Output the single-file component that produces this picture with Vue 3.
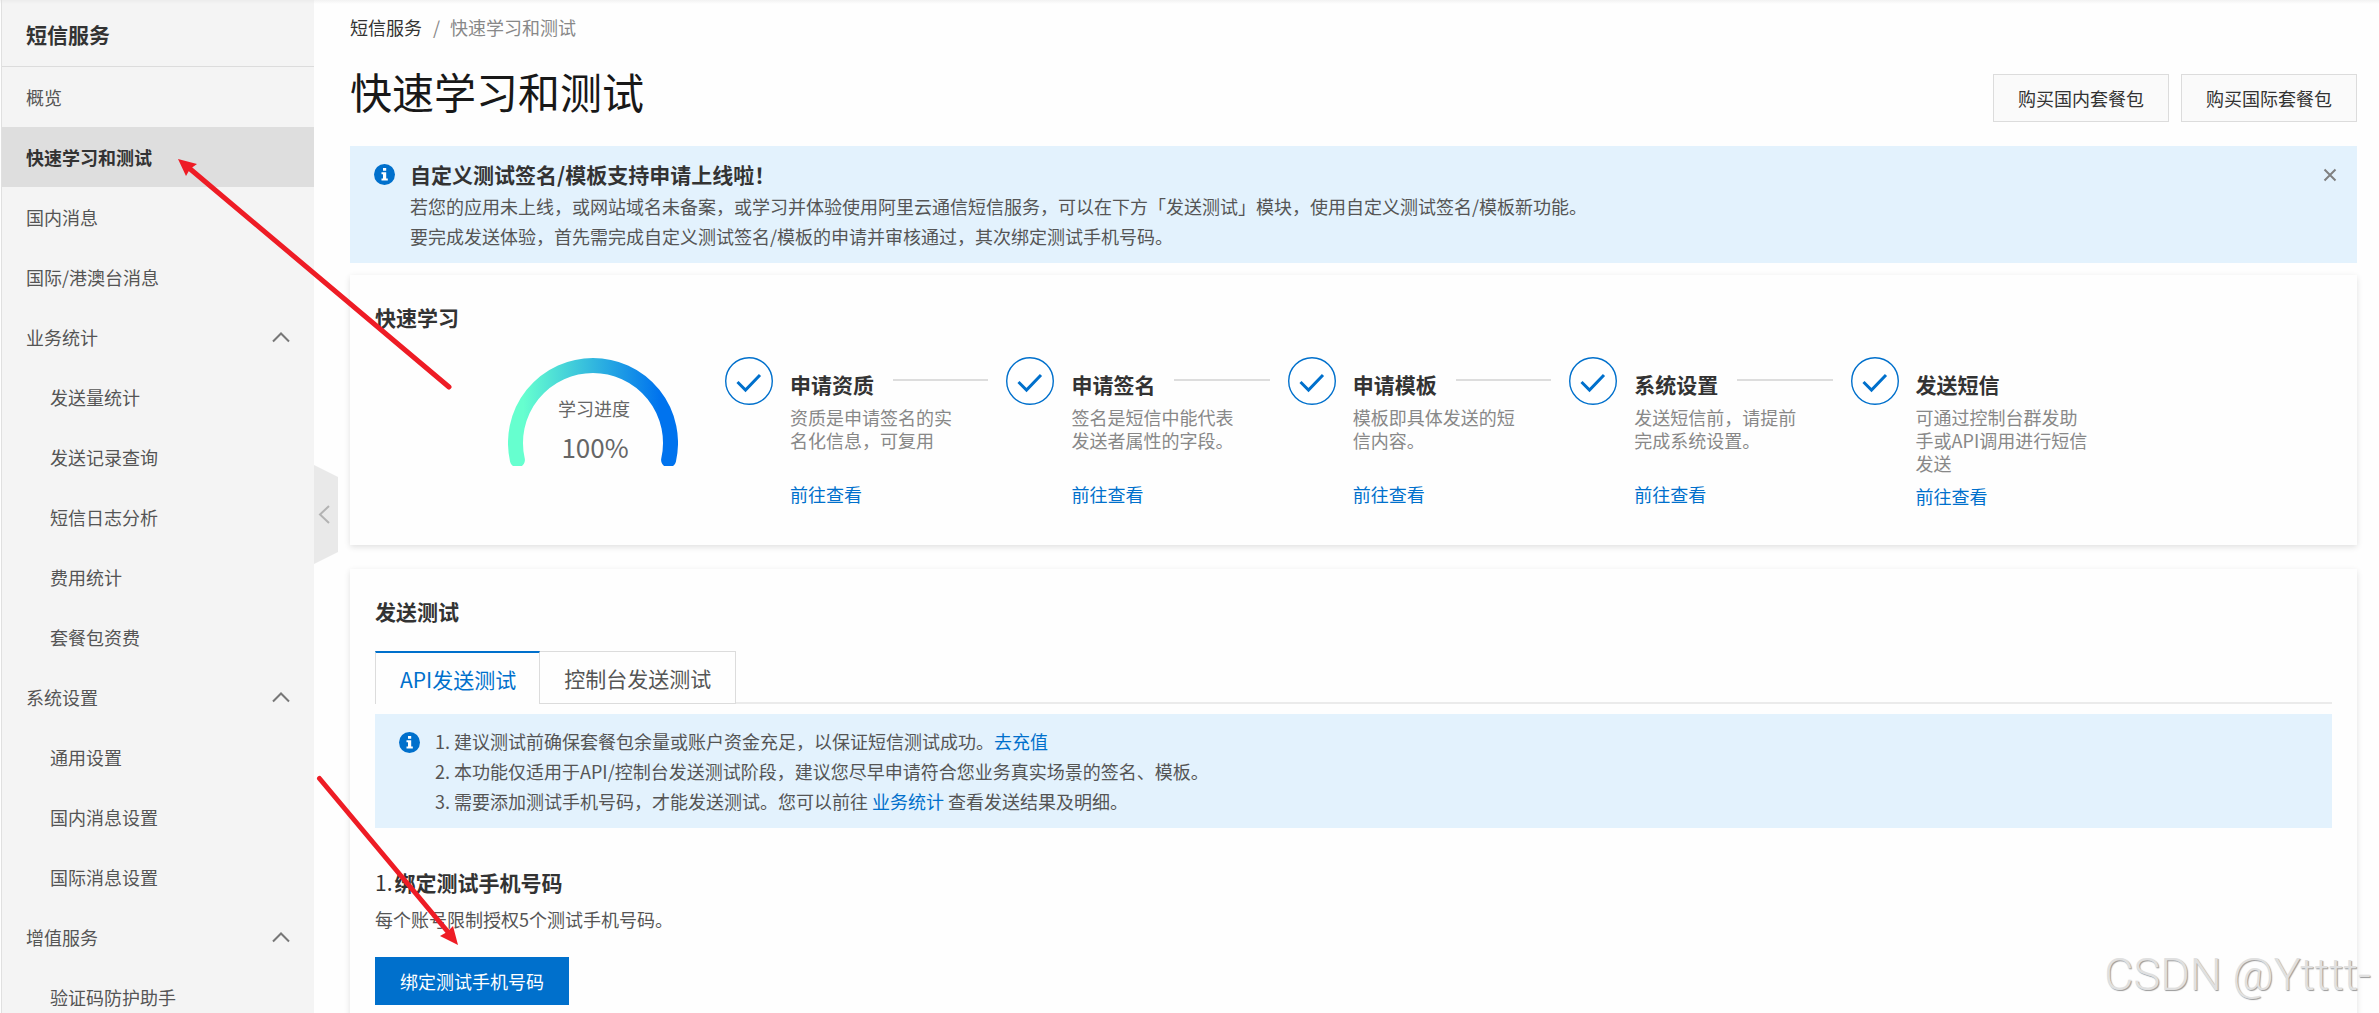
<script setup>
import { ref } from 'vue'

const menu = [
  { label: '概览' },
  { label: '快速学习和测试', active: true },
  { label: '国内消息' },
  { label: '国际/港澳台消息' },
  { label: '业务统计', children: ['发送量统计', '发送记录查询', '短信日志分析', '费用统计', '套餐包资费'] },
  { label: '系统设置', children: ['通用设置', '国内消息设置', '国际消息设置'] },
  { label: '增值服务', children: ['验证码防护助手'] },
]

const steps = [
  { title: '申请资质', desc: '资质是申请签名的实名化信息，可复用' },
  { title: '申请签名', desc: '签名是短信中能代表发送者属性的字段。' },
  { title: '申请模板', desc: '模板即具体发送的短信内容。' },
  { title: '系统设置', desc: '发送短信前，请提前完成系统设置。' },
  { title: '发送短信', desc: '可通过控制台群发助手或API调用进行短信发送' },
]

const tabs = ['API发送测试', '控制台发送测试']
const activeTab = ref(0)
const noticeOpen = ref(true)
</script>

<template>
  <div class="shell">
    <aside class="sidebar">
      <div class="brand">短信服务</div>
      <nav>
        <ul class="menu">
          <li v-for="item in menu" :key="item.label">
            <a href="#" class="item" :class="{ active: item.active }">
              <span>{{ item.label }}</span>
              <svg v-if="item.children" width="20" height="12" viewBox="0 0 20 12" aria-hidden="true">
                <path d="M2 10.5 10 2.5 18 10.5" fill="none" stroke="#777" stroke-width="2" />
              </svg>
            </a>
            <ul v-if="item.children" class="menu">
              <li v-for="child in item.children" :key="child">
                <a href="#" class="item sub">{{ child }}</a>
              </li>
            </ul>
          </li>
        </ul>
      </nav>
      <button class="collapse" type="button" aria-label="收起菜单">
        <svg width="24" height="99" viewBox="0 0 24 99">
          <path d="M0 0 24 12V87L0 99Z" fill="#e9e9e9" />
          <path d="M15 41 6 49.500 15 58" fill="none" stroke="#b3b3b3" stroke-width="2" />
        </svg>
      </button>
    </aside>

    <main class="main">
      <nav class="crumbs">
        <a href="#">短信服务</a><span class="slash">/</span><span>快速学习和测试</span>
      </nav>
      <header class="head">
        <h1>快速学习和测试</h1>
        <div class="actions">
          <button class="btn" type="button">购买国内套餐包</button>
          <button class="btn" type="button">购买国际套餐包</button>
        </div>
      </header>

      <section v-if="noticeOpen" class="notice">
        <svg class="info" width="21" height="21" viewBox="0 0 21 21" aria-hidden="true">
          <circle cx="10.500" cy="10.500" r="10.500" fill="#0070cc" />
          <path d="M9 4h3.200v2.800H9zM7.500 8.300h4.700v6.200h1.600v2H7.500v-2H9v-4.200H7.500z" fill="#fff" />
        </svg>
        <div class="notice-body">
          <h2 class="notice-title">自定义测试签名/模板支持申请上线啦！</h2>
          <p>若您的应用未上线，或网站域名未备案，或学习并体验使用阿里云通信短信服务，可以在下方「发送测试」模块，使用自定义测试签名/模板新功能。</p>
          <p>要完成发送体验，首先需完成自定义测试签名/模板的申请并审核通过，其次绑定测试手机号码。</p>
        </div>
        <button class="close" type="button" aria-label="关闭" @click="noticeOpen = false">
          <svg width="14" height="14" viewBox="0 0 14 14">
            <path d="M1.500 1.500 12.500 12.500M12.500 1.500 1.500 12.500" stroke="#808080" stroke-width="2" />
          </svg>
        </button>
      </section>

      <section class="card learn">
        <h2>快速学习</h2>
        <div class="learn-row">
          <svg class="gauge" width="170" height="109" viewBox="0 0 170 109">
            <defs>
              <linearGradient id="arc" x1="0" x2="1" y1="0" y2="0">
                <stop offset="0.050" stop-color="#66ffcf" />
                <stop offset="0.930" stop-color="#0073ee" />
              </linearGradient>
            </defs>
            <path
              d="M9.400 103A77.500 77.500 0 1 1 160.600 103"
              fill="none"
              stroke="url(#arc)"
              stroke-width="15"
              stroke-linecap="round"
            />
            <text class="gauge-label" x="86" y="59">学习进度</text>
            <text class="gauge-value" x="87" y="101">100%</text>
          </svg>
          <ol class="steps">
            <li v-for="step in steps" :key="step.title" class="step">
              <svg class="tick" width="48" height="48" viewBox="0 0 48 48" aria-hidden="true">
                <circle cx="24" cy="24" r="23.300" fill="#fff" stroke="#0070cc" stroke-width="1.400" />
                <path d="M12.500 25 20.500 33 35 18" fill="none" stroke="#0070cc" stroke-width="3" />
              </svg>
              <div class="step-body">
                <h3>{{ step.title }}</h3>
                <p>{{ step.desc }}</p>
                <a href="#">前往查看</a>
              </div>
            </li>
          </ol>
        </div>
      </section>

      <section class="card">
        <h2>发送测试</h2>
        <div class="tabs" role="tablist">
          <button
            v-for="(tab, i) in tabs"
            :key="tab"
            class="tab"
            :class="{ on: activeTab === i }"
            type="button"
            role="tab"
            :aria-selected="activeTab === i"
            @click="activeTab = i"
          >
            {{ tab }}
          </button>
        </div>
        <div class="notice tips">
          <svg class="info" width="21" height="21" viewBox="0 0 21 21" aria-hidden="true">
            <circle cx="10.500" cy="10.500" r="10.500" fill="#0070cc" />
            <path d="M9 4h3.200v2.800H9zM7.500 8.300h4.700v6.200h1.600v2H7.500v-2H9v-4.200H7.500z" fill="#fff" />
          </svg>
          <div class="notice-body">
            <p>1. 建议测试前确保套餐包余量或账户资金充足，以保证短信测试成功。<a href="#">去充值</a></p>
            <p>2. 本功能仅适用于API/控制台发送测试阶段，建议您尽早申请符合您业务真实场景的签名、模板。</p>
            <p>3. 需要添加测试手机号码，才能发送测试。您可以前往 <a href="#">业务统计</a> 查看发送结果及明细。</p>
          </div>
        </div>
        <h3 class="bind-title"><span>1.</span>绑定测试手机号码</h3>
        <p class="bind-desc">每个账号限制授权5个测试手机号码。</p>
        <button class="btn primary" type="button">绑定测试手机号码</button>
      </section>
    </main>

    <svg class="arrows" width="460" height="960" viewBox="0 0 460 960" aria-hidden="true">
      <g stroke="#ee1c25" stroke-width="5" stroke-linecap="round">
        <path d="M449 387 189 168M319.500 778.500 448 932" />
      </g>
      <path d="M178 159 197 164 190 169 186 176ZM458 945 440 936 447 932 453 926Z" fill="#ee1c25" />
    </svg>
    <div class="watermark">CSDN @Ytttt-</div>
  </div>
</template>

<style>
body {
  margin: 0;
  background: #fefefe;
}
</style>

<style scoped>
.shell {
  position: relative;
  display: flex;
  height: 100vh;
  overflow: hidden;
  box-sizing: border-box;
  font-family: "Noto Sans CJK SC", "Noto Sans", sans-serif;
  font-size: 18px;
  line-height: 30px;
  color: #555;
  background: linear-gradient(#f2f2f2, #fefefe 4px);
}

h1,
h2,
h3,
p,
ul,
ol {
  margin: 0;
  padding: 0;
}

ul,
ol {
  list-style: none;
}

a {
  color: #0070cc;
  text-decoration: none;
}

button {
  font: inherit;
  cursor: pointer;
}

.sidebar {
  position: relative;
  flex: none;
  width: 312px;
  margin-left: 1px;
  border-left: 1px solid #e0e0e0;
  background: linear-gradient(#ececec, #f4f4f4 4px);
}

.brand {
  height: 67px;
  padding: 4px 24px 0;
  box-sizing: border-box;
  border-bottom: 1px solid #dcdcdc;
  font-size: 21px;
  line-height: 60px;
  font-weight: 700;
  color: #333;
}

.menu .item {
  display: flex;
  align-items: center;
  justify-content: space-between;
  height: 60px;
  padding: 0 23px 0 24px;
  color: #555;
}

.menu .item.active {
  background: #dedede;
  color: #333;
  font-weight: 700;
}

.menu .item.sub {
  padding-left: 48px;
}

.collapse {
  position: absolute;
  top: 465px;
  left: 100%;
  padding: 0;
  border: 0;
  background: none;
}

.collapse svg {
  display: block;
}

.main {
  flex: 1;
  min-width: 0;
  padding: 12px 22px 0 36px;
}

.crumbs {
  color: #888;
}

.crumbs a {
  color: #333;
}

.slash {
  margin: 0 10px 0 11px;
}

.head {
  display: flex;
  align-items: flex-start;
  justify-content: space-between;
  margin: 16px 0 22px;
}

h1 {
  font-size: 42px;
  line-height: 66px;
  font-weight: 400;
  color: #181818;
}

.actions {
  display: flex;
  gap: 12px;
  margin-top: 16px;
}

.btn {
  height: 48px;
  padding: 0 24px;
  border: 1px solid #dcdcdc;
  background: #fafafa;
  color: #333;
}

.btn.primary {
  border-color: #0070cc;
  background: #0070cc;
  color: #fff;
}

.notice {
  display: flex;
  align-items: flex-start;
  padding: 12px 20px 12px 24px;
  background: #e3f2fd;
}

.info {
  flex: none;
  margin: 6px 15px 0 0;
}

.notice-body {
  flex: 1;
}

.notice-title {
  font-size: 21px;
  line-height: 33px;
  font-weight: 700;
  color: #333;
}

.close {
  margin-top: 10px;
  padding: 0;
  border: 0;
  background: none;
  line-height: 0;
}

.card {
  margin-top: 24px;
  padding: 27px 25px 34px;
  background: #fefefe;
  box-shadow: 0 2px 6px rgba(0, 0, 0, 0.12);
}

.card.learn {
  margin-top: 12px;
}

.card h2 {
  margin-bottom: 25px;
  font-size: 21px;
  line-height: 30px;
  color: #333;
}

.learn-row {
  display: flex;
  align-items: flex-start;
  padding: 0 200px 0 133px;
}

.gauge {
  flex: none;
  margin-right: 47px;
}

.gauge text {
  text-anchor: middle;
  fill: #666;
}

.gauge-label {
  font-size: 18px;
}

.gauge-value {
  font-size: 26px;
}

.steps {
  flex: 1;
  display: grid;
  grid-template-columns: repeat(5, 1fr);
}

.step {
  display: flex;
  align-items: flex-start;
}

.tick {
  flex: none;
  margin-right: 17px;
}

.step-body {
  flex: 1;
  padding-top: 12px;
}

.step h3 {
  display: flex;
  font-size: 21px;
  line-height: 30px;
  color: #333;
}

.step:not(:last-child) h3::after {
  content: "";
  flex: 1;
  height: 2px;
  margin: 10px 18px 0 19px;
  background: #ddd;
}

.step p {
  width: 174px;
  min-height: 67px;
  margin: 7px 0 6px;
  line-height: 23px;
  color: #888;
}

.step a {
  display: block;
}

.tabs {
  display: flex;
  box-shadow: inset 0 -2px #ebebeb;
}

.tab {
  height: 53px;
  padding: 0 24px;
  border: 1px solid #dcdcdc;
  border-left: 0;
  background: #fefefe;
  font-size: 21px;
  color: #555;
}

.tab:first-child {
  padding-right: 23px;
  border-left: 1px solid #dcdcdc;
}

.tab.on {
  border-top: 2px solid #0070cc;
  border-bottom: 0;
  color: #0070cc;
}

.tips {
  margin-top: 10px;
}

.bind-title {
  margin-top: 39px;
  font-size: 21px;
  line-height: 30px;
  color: #333;
}

.bind-title span {
  margin-right: 2px;
  font-weight: 400;
}

.bind-desc {
  margin: 7px 0 23px;
}

.arrows {
  position: absolute;
  top: 0;
  left: 0;
  pointer-events: none;
}

.watermark {
  position: absolute;
  right: 8px;
  bottom: 8px;
  font-family: Roboto, sans-serif;
  font-size: 45px;
  line-height: 60px;
  font-weight: 300;
  color: #e0e0e0;
  text-shadow: 1px 1px 1px #999;
}
</style>
